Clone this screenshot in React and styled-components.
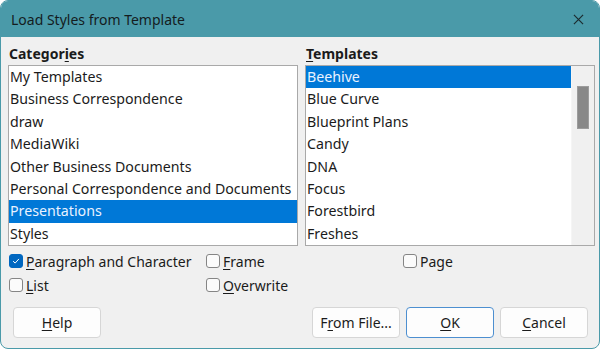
import React from 'react';
import styled, { createGlobalStyle } from 'styled-components';

const GlobalStyle = createGlobalStyle`
  html, body {
    margin: 0;
    padding: 0;
    background: #ffffff;
  }
  body {
    font-family: "Noto Sans", "Open Sans", sans-serif;
    color: #1b1b1b;
  }
`;

const categories = [
  'My Templates',
  'Business Correspondence',
  'draw',
  'MediaWiki',
  'Other Business Documents',
  'Personal Correspondence and Documents',
  'Presentations',
  'Styles',
];

const templates = [
  'Beehive',
  'Blue Curve',
  'Blueprint Plans',
  'Candy',
  'DNA',
  'Focus',
  'Forestbird',
  'Freshes',
];

const Mn = ({ children }) => <u>{children}</u>;

const App = () => (
  <>
    <GlobalStyle />
    <Window>
      <TitleBar>
        <Title>Load Styles from Template</Title>
        <CloseIcon viewBox="0 0 12 12">
          <path d="M1 1 L11 11 M11 1 L1 11" stroke="#1c2c30" strokeWidth="1.3" fill="none" />
        </CloseIcon>
      </TitleBar>
      <Body>
        <Lists>
          <Column>
            <Label>
              Categor<Mn>i</Mn>es
            </Label>
            <ListBox>
              <Rows>
                {categories.map((c) => (
                  <Row key={c} selected={c === 'Presentations'}>
                    {c}
                  </Row>
                ))}
              </Rows>
            </ListBox>
          </Column>
          <Column>
            <Label>
              <Mn>T</Mn>emplates
            </Label>
            <ListBox>
              <Rows>
                {templates.map((t) => (
                  <Row key={t} selected={t === 'Beehive'}>
                    {t}
                  </Row>
                ))}
              </Rows>
              <ScrollTrack>
                <Thumb />
              </ScrollTrack>
            </ListBox>
          </Column>
        </Lists>
        <Options>
          <Check checked>
            <Box checked>
              <svg viewBox="0 0 12 12" width="10" height="10">
                <path d="M2.5 6.2 L5 8.5 L9.5 3.5" stroke="#ffffff" strokeWidth="1.2" fill="none" />
              </svg>
            </Box>
            <span>
              <Mn>P</Mn>aragraph and Character
            </span>
          </Check>
          <Check>
            <Box />
            <span>
              <Mn>F</Mn>rame
            </span>
          </Check>
          <Check>
            <Box />
            <span>Page</span>
          </Check>
          <Check>
            <Box />
            <span>
              <Mn>L</Mn>ist
            </span>
          </Check>
          <Check>
            <Box />
            <span>
              <Mn>O</Mn>verwrite
            </span>
          </Check>
        </Options>
        <Buttons>
          <Button>
            <Mn>H</Mn>elp
          </Button>
          <Spacer />
          <Button>
            F<Mn>r</Mn>om File...
          </Button>
          <Button primary>
            <Mn>O</Mn>K
          </Button>
          <Button>
            <Mn>C</Mn>ancel
          </Button>
        </Buttons>
      </Body>
    </Window>
  </>
);

const Window = styled.div`
  box-sizing: border-box;
  width: 600px;
  height: 349px;
  border: 1px solid #4a9aa9;
  border-radius: 8px;
  overflow: hidden;
  display: flex;
  flex-direction: column;
  background: #f0f0f0;
`;

const TitleBar = styled.div`
  height: 36px;
  flex: none;
  background: #4a9aa9;
  display: flex;
  align-items: center;
  justify-content: space-between;
  padding: 0 15px 0 10px;
`;

const Title = styled.div`
  font-size: 14px;
  color: #141c1e;
  margin-top: 1px;
`;

const CloseIcon = styled.svg`
  width: 11px;
  height: 11px;
`;

const Body = styled.div`
  flex: 1;
  display: flex;
  flex-direction: column;
  padding: 6px 4px 10px 7px;
`;

const Lists = styled.div`
  display: grid;
  grid-template-columns: 290px 290px;
  column-gap: 7px;
`;

const Column = styled.div`
  display: flex;
  flex-direction: column;
`;

const Label = styled.div`
  font-size: 14px;
  font-weight: 700;
  height: 22px;
  line-height: 22px;
  padding-left: 1px;
  u {
    text-underline-offset: 2px;
  }
`;

const ListBox = styled.div`
  box-sizing: border-box;
  height: 181px;
  border: 1px solid #a9a9a9;
  background: #ffffff;
  display: flex;
`;

const Rows = styled.div`
  flex: 1;
  display: flex;
  flex-direction: column;
`;

const Row = styled.div`
  height: 22.4px;
  line-height: 22px;
  font-size: 14.2px;
  padding-left: 1px;
  white-space: nowrap;
  background: ${(p) => (p.selected ? '#0078d7' : 'transparent')};
  color: ${(p) => (p.selected ? '#eaf2ff' : '#1b1b1b')};
`;

const ScrollTrack = styled.div`
  width: 22px;
  flex: none;
  background: #f0f0f0;
  border-left: 1px solid #f5f5f5;
  display: flex;
  justify-content: center;
  padding-top: 20px;
`;

const Thumb = styled.div`
  width: 12px;
  height: 43px;
  background: #888888;
  border: 1px solid #9c9c9c;
  box-sizing: border-box;
`;

const Options = styled.div`
  display: grid;
  grid-template-columns: 197px 197px 197px;
  grid-auto-rows: 24px;
  margin-top: 3px;
  padding-left: 1px;
`;

const Check = styled.label`
  display: flex;
  align-items: center;
  gap: 3px;
  font-size: 14px;
  color: #1b1b1b;
  u {
    text-underline-offset: 2px;
  }
`;

const Box = styled.span`
  box-sizing: border-box;
  width: 14px;
  height: 14px;
  border-radius: 3px;
  border: 1px solid ${(p) => (p.checked ? '#0067c0' : '#858585')};
  background: ${(p) => (p.checked ? '#0067c0' : '#fbfbfb')};
  display: flex;
  align-items: center;
  justify-content: center;
`;

const Buttons = styled.div`
  margin-top: auto;
  display: flex;
  gap: 6px;
  padding: 0 7px 0 5px;
`;

const Spacer = styled.div`
  flex: 1;
`;

const Button = styled.button`
  box-sizing: border-box;
  width: 88px;
  height: 31px;
  border-radius: 4px;
  border: 1px solid ${(p) => (p.primary ? '#4d8fd0' : '#d6d6d6')};
  background: #fdfdfd;
  font-family: "Noto Sans", "Open Sans", sans-serif;
  font-size: 14px;
  color: #1b1b1b;
  padding: 0;
  u {
    text-underline-offset: 2px;
  }
`;

export default App;
